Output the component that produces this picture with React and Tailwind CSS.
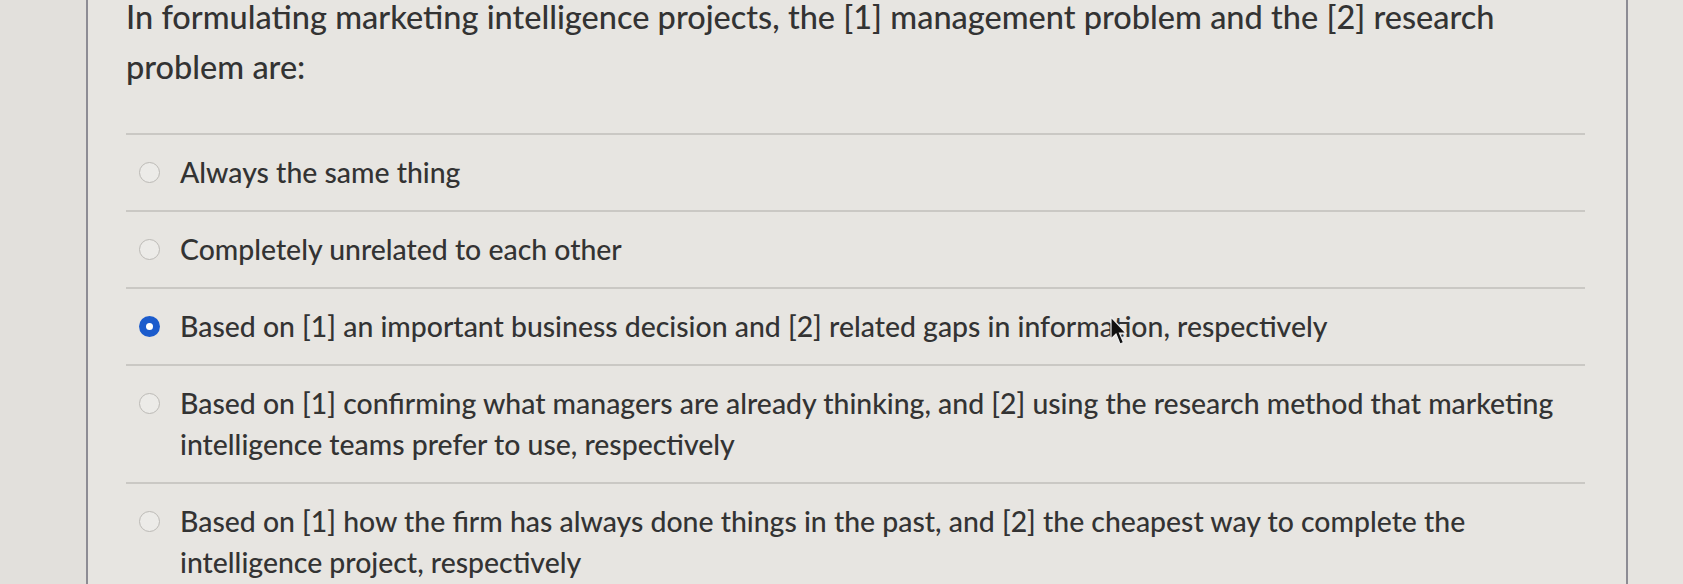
const options = [
    { text: 'Always the same thing' },
    { text: 'Completely unrelated to each other' },
    {
        text: 'Based on [1] an important business decision and [2] related gaps in information, respectively',
        selected: true,
    },
    {
        text: 'Based on [1] confirming what managers are already thinking, and [2] using the research method that marketing intelligence teams prefer to use, respectively',
    },
    {
        text: 'Based on [1] how the firm has always done things in the past, and [2] the cheapest way to complete the intelligence project, respectively',
    },
];

function Radio({ selected }) {
    if (selected) {
        return (
            <span className="mt-[10px] flex h-[21px] w-[21px] shrink-0 items-center justify-center rounded-full bg-[#1b5bcc]">
                <span className="h-[7px] w-[7px] rounded-full bg-white" />
            </span>
        );
    }
    return <span className="mt-[10px] h-[21px] w-[21px] shrink-0 rounded-full border-[1.5px] border-[#bcbab6] bg-[#ecebe8]" />;
}

function Cursor() {
    return (
        <svg className="absolute left-[1109px] top-[316px]" width="20" height="30" viewBox="0 0 20 30">
            <path d="M2 1 L2 23 L7 18 L11 28 L14.5 26.5 L10.5 17 L17 17 Z" fill="#111" stroke="#eeeeee" strokeWidth="1.2" />
        </svg>
    );
}

function App() {
    return (
        <div
            className="relative flex h-[584px] w-full overflow-hidden bg-[#e7e5e1] text-[#333333]"
            style={{ fontFamily: 'Lato, "Open Sans", sans-serif' }}
        >
            <div className="w-[88px] shrink-0 border-r-2 border-[#8d8c94] bg-[#e2e0dc]" />
            <main className="w-[1540px] shrink-0 border-r-2 border-[#8d8c94] pl-[38px]">
                <h1 className="-mt-[8px] w-[1460px] text-[32.5px] leading-[50px] font-medium">
                    In formulating marketing intelligence projects, the [1] management problem and the [2] research problem are:
                </h1>
                <div className="mt-[41px] w-[1459px] border-t-2 border-[#cac8c4]">
                    {options.map((o, i) => (
                        <div
                            key={i}
                            className="flex gap-[20px] border-b-2 border-[#cac8c4] py-[17px] pl-[13px] pr-[10px] last:border-b-0"
                        >
                            <Radio selected={o.selected} />
                            <span className="text-[28.4px] leading-[41px] font-medium">{o.text}</span>
                        </div>
                    ))}
                </div>
            </main>
            <div className="flex-1 bg-[#e6e4e0]" />
            <Cursor />
        </div>
    );
}

export default App;
